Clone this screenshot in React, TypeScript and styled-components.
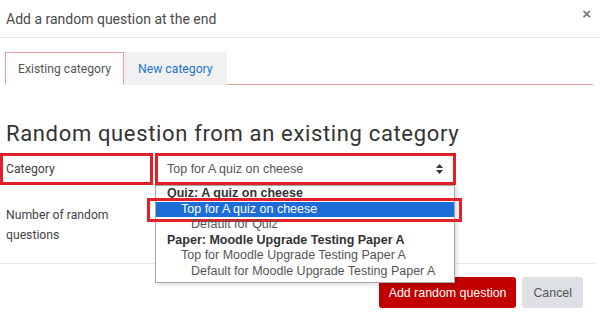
import React from "react";
import styled, { createGlobalStyle } from "styled-components";

const GlobalStyle = createGlobalStyle`
  html, body {
    margin: 0;
    padding: 0;
    background: #fff;
  }
  body {
    font-family: Roboto, "Liberation Sans", Arial, sans-serif;
    color: #333;
  }
`;

const Modal = styled.div`
  width: 600px;
  height: 319px;
  overflow: hidden;
`;

const Header = styled.div`
  height: 38px;
  display: flex;
  align-items: center;
  justify-content: space-between;
  padding: 0 9px 0 6px;
  border-bottom: 1px solid #e3e3e3;
  box-sizing: border-box;
`;

const Title = styled.h5`
  margin: 0;
  font-size: 14px;
  font-weight: 400;
  color: #4a4a4a;
`;

const Close = styled.span`
  font-family: "Liberation Sans", Arial, sans-serif;
  font-size: 15px;
  font-weight: 700;
  color: #777;
  margin-top: -11px;
  line-height: 1;
`;

const Body = styled.div`
  padding: 14px 7px 0 5px;
`;

const TabNav = styled.div`
  display: flex;
  border-bottom: 1px solid #e89c9c;
`;

const Tab = styled.div<{ $active?: boolean }>`
  height: 31px;
  display: flex;
  align-items: center;
  padding: 0 ${(p) => (p.$active ? 12 : 13)}px;
  font-size: 12.2px;
  margin-bottom: -1px;
  border: 1px solid ${(p) => (p.$active ? "#e89c9c" : "transparent")};
  border-bottom-color: ${(p) => (p.$active ? "#fff" : "transparent")};
  background: ${(p) => (p.$active ? "#fff" : "#f1f1f4")};
  color: ${(p) => (p.$active ? "#555" : "#1a77c9")};
`;

const Heading = styled.h3`
  margin: 35px 0 0 1px;
  font-size: 22px;
  font-weight: 400;
  letter-spacing: 0.65px;
  color: #333;
  line-height: 28px;
`;

const Row = styled.div`
  display: flex;
  align-items: flex-start;
  margin-left: -5px;
`;

const CategoryRow = styled(Row)`
  margin-top: 5px;
  position: relative;
`;

const LabelBox = styled.div<{ $marked?: boolean }>`
  width: 153px;
  height: 32px;
  box-sizing: border-box;
  display: flex;
  align-items: center;
  padding-left: 3px;
  font-size: 12.2px;
  color: #444;
  border: 3px solid ${(p) => (p.$marked ? "#e0202a" : "transparent")};
`;

const Select = styled.div`
  margin-left: 2px;
  width: 301px;
  height: 32px;
  box-sizing: border-box;
  border: 3px solid #e0202a;
  display: flex;
  align-items: center;
  justify-content: space-between;
  padding: 0 10px 0 9px;
  font-family: "Liberation Sans", Arial, sans-serif;
  font-size: 12.5px;
  color: #555;
`;

const Arrows = styled.svg`
  width: 7px;
  height: 10px;
`;

const Dropdown = styled.div`
  position: absolute;
  left: 155px;
  top: 32px;
  width: 300px;
  box-sizing: border-box;
  background: #fff;
  border: 1px solid #a8a8a8;
  box-shadow: 2px 2px 4px rgba(0, 0, 0, 0.15);
  padding: 0 0 3px;
  font-family: "Liberation Sans", Arial, sans-serif;
  font-size: 12.5px;
  z-index: 2;
`;

const Option = styled.div<{ $level: number; $group?: boolean; $selected?: boolean }>`
  position: relative;
  height: 15.5px;
  line-height: 15px;
  padding-left: ${(p) => [11, 25, 35][p.$level]}px;
  font-weight: ${(p) => (p.$group ? 700 : 400)};
  color: ${(p) => (p.$selected ? "#fff" : p.$group ? "#333" : "#555")};
  background: ${(p) => (p.$selected ? "#1c6dd8" : "transparent")};
  white-space: nowrap;

  ${(p) =>
    p.$selected &&
    `
    &::after {
      content: "";
      position: absolute;
      left: -9px;
      right: -8px;
      top: -4px;
      bottom: -5px;
      border: 3px solid #e0202a;
    }
  `}
`;

const NumberRow = styled(Row)`
  margin-top: 20px;
`;

const LabelText = styled.div`
  width: 130px;
  padding-left: 6px;
  font-size: 12.2px;
  line-height: 20px;
  color: #444;
`;

const Footer = styled.div`
  margin: 18px -2px 0 -5px;
  border-top: 1px solid #e6e6e6;
  display: flex;
  justify-content: flex-end;
  gap: 6px;
  padding: 13px 12px 0 0;
`;

const Button = styled.button<{ $primary?: boolean }>`
  height: 31px;
  border: none;
  border-radius: 3px;
  padding: 0 ${(p) => (p.$primary ? 10 : 11)}px;
  font-family: "Liberation Sans", Arial, sans-serif;
  font-size: 12.4px;
  background: ${(p) => (p.$primary ? "#c20000" : "#dde1e5")};
  color: ${(p) => (p.$primary ? "#fff" : "#555")};
`;

const options = [
  { label: "Quiz: A quiz on cheese", level: 0, group: true },
  { label: "Top for A quiz on cheese", level: 1, selected: true },
  { label: "Default for Quiz", level: 2 },
  { label: "Paper: Moodle Upgrade Testing Paper A", level: 0, group: true },
  { label: "Top for Moodle Upgrade Testing Paper A", level: 1 },
  { label: "Default for Moodle Upgrade Testing Paper A", level: 2 },
];

export default function App() {
  return (
    <Modal>
      <GlobalStyle />
      <Header>
        <Title>Add a random question at the end</Title>
        <Close>×</Close>
      </Header>
      <Body>
        <TabNav>
          <Tab $active>Existing category</Tab>
          <Tab>New category</Tab>
        </TabNav>
        <Heading>Random question from an existing category</Heading>
        <CategoryRow>
          <LabelBox $marked>Category</LabelBox>
          <Select>
            <span>Top for A quiz on cheese</span>
            <Arrows viewBox="0 0 7 10">
              <path d="M3.5 0 L7 4 H0 Z M3.5 10 L7 6 H0 Z" fill="#333" />
            </Arrows>
          </Select>
          <Dropdown>
            {options.map((o) => (
              <Option
                key={o.label}
                $level={o.level}
                $group={o.group}
                $selected={o.selected}
              >
                {o.label}
              </Option>
            ))}
          </Dropdown>
        </CategoryRow>
        <NumberRow>
          <LabelText>Number of random questions</LabelText>
        </NumberRow>
        <Footer>
          <Button $primary>Add random question</Button>
          <Button>Cancel</Button>
        </Footer>
      </Body>
    </Modal>
  );
}
